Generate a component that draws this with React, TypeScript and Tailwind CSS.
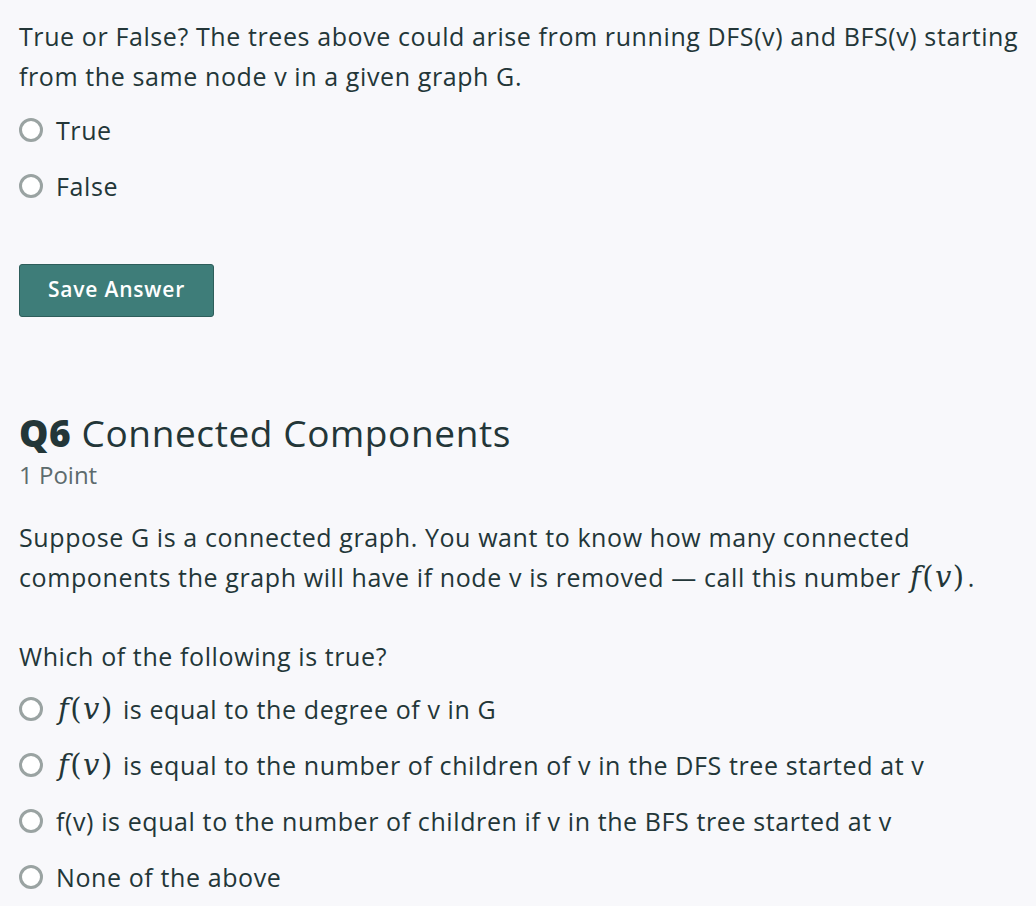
import React from 'react';

const MathF = () => (
  <span className="font-['DejaVu_Serif','Liberation_Serif',serif] text-[29px] tracking-[1.5px] mx-[2px]">
    <i>f</i>(<i>v</i>)
  </span>
);

function Radio({ children }: { children: React.ReactNode }) {
  return (
    <label className="flex items-center gap-[13px] h-[56px]">
      <span className="w-[24px] h-[24px] rounded-full border-[3px] border-[#9aa3a2] bg-white shrink-0" />
      <span>{children}</span>
    </label>
  );
}

export default function App() {
  return (
    <div className="min-h-screen bg-[#f8f8fb] text-[#233638] font-['Open_Sans',sans-serif] text-[25px] tracking-[0.6px] leading-[40px] pl-[19px] pt-[16px] overflow-hidden">
      <div className="w-[1017px]">
        <p>
          True or False? The trees above could arise from running DFS(v) and BFS(v) starting from the same node v in a given graph G.
        </p>
        <div className="mt-[6px]">
          <Radio>True</Radio>
          <Radio>False</Radio>
        </div>
        <button className="mt-[50px] w-[195px] h-[53px] rounded-[3px] bg-[#3e7d79] border border-[#2e5e5b] text-white text-[21px] tracking-[0.8px] font-semibold leading-[44px] pb-[4px]">
          Save Answer
        </button>

        <h2 className="mt-[94px] text-[37px] tracking-[0.6px] leading-[44px]">
          <span className="font-extrabold">Q6</span> Connected Components
        </h2>
        <div className="mt-[2px] text-[#5d6b6d] text-[24px] tracking-normal leading-[36px]">1 Point</div>

        <p className="mt-[24px]">
          Suppose G is a connected graph. You want to know how many connected components the graph will have if node v is removed — call this number <MathF />.
        </p>

        <p className="mt-[39px]">Which of the following is true?</p>
        <div className="mt-[5px]">
          <Radio><MathF /> is equal to the degree of v in G</Radio>
          <Radio><MathF /> is equal to the number of children of v in the DFS tree started at v</Radio>
          <Radio>f(v) is equal to the number of children if v in the BFS tree started at v</Radio>
          <Radio>None of the above</Radio>
        </div>
      </div>
    </div>
  );
}
